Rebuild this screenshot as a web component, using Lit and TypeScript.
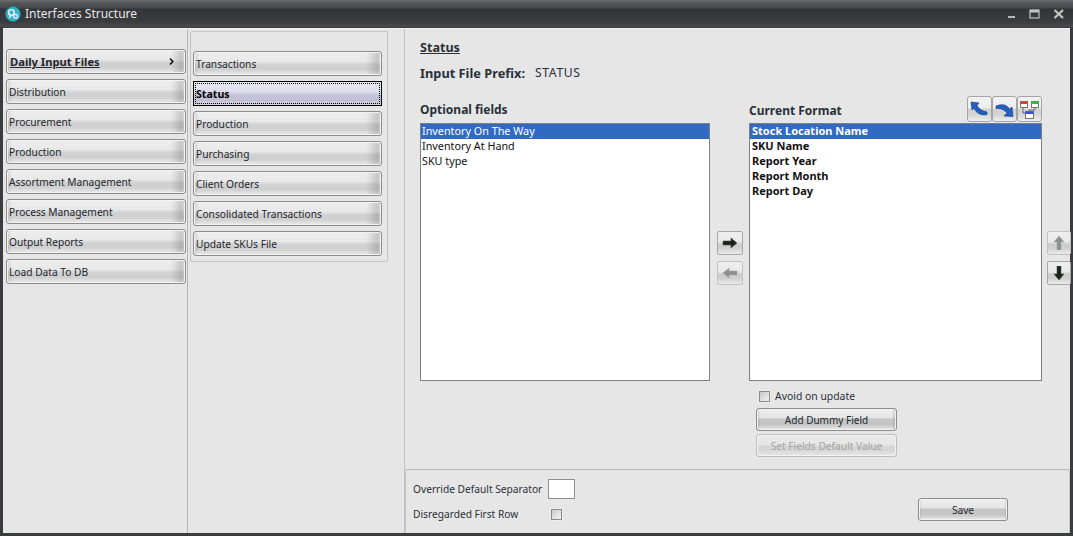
import { LitElement, html, css, svg } from 'lit';
import { customElement } from 'lit/decorators.js';

const MAIN_MENU = [
  'Distribution',
  'Procurement',
  'Production',
  'Assortment Management',
  'Process Management',
  'Output Reports',
  'Load Data To DB',
];
const SUB_MENU = ['Transactions', 'Status', 'Production', 'Purchasing', 'Client Orders', 'Consolidated Transactions', 'Update SKUs File'];
const OPTIONAL = ['Inventory On The Way', 'Inventory At Hand', 'SKU type'];
const CURRENT = ['Stock Location Name', 'SKU Name', 'Report Year', 'Report Month', 'Report Day'];

const arrow = (d: string, on: boolean) => svg`<svg width="16" height="14" viewBox="0 0 16 14">
  <path d=${d} fill=${on ? '#1c1f1c' : '#8d918d'} stroke=${on ? '#4b554b' : '#a5a8a5'} stroke-width=".6"/></svg>`;

@customElement('app-root')
export class AppRoot extends LitElement {
  static styles = css`
    :host {
      display: block;
      width: 1073px;
      height: 536px;
      overflow: hidden;
      background: #3a3c3f;
      font-family: "Noto Sans", "DejaVu Sans", sans-serif;
      font-size: 10.2px;
      color: #2b2f38;
    }
    .title {
      height: 28px;
      box-sizing: border-box;
      display: flex;
      align-items: center;
      padding: 0 8px 1px 5px;
      gap: 4px;
      background: linear-gradient(#6a6c70 0, #55575b 3px, #45474b 8px, #323438 9px, #3b3d41 22px, #4a4c50 27px, #2b2c2f 28px);
      color: #e8e8e8;
      font-size: 12px;
    }
    .title .name { flex: 1; }
    .win { display: flex; align-items: center; gap: 12px; }
    .body {
      height: 505px;
      margin: 0 3px 0 3px;
      display: grid;
      grid-template-columns: 185px 217px 1fr;
      background: #e6e6e6;
      border-top: 1px solid #f4f4f4;
      box-sizing: border-box;
    }
    .col-main {
      padding: 20px 1px 0 3px;
      display: flex;
      flex-direction: column;
      gap: 5px;
      border-right: 1px solid #b4b4b4;
      box-sizing: border-box;
    }
    .col-sub {
      padding: 2px 16px 0 2px;
      border-right: 1px solid #c0c0c0;
      box-sizing: border-box;
    }
    .sub-panel {
      height: 231px;
      box-sizing: border-box;
      border: 1px solid #c4c4c4;
      border-radius: 2px;
      padding: 19px 5px 0 2px;
      display: flex;
      flex-direction: column;
      gap: 5px;
    }
    .btn {
      height: 25px;
      box-sizing: border-box;
      display: flex;
      align-items: center;
      justify-content: center;
      border: 1px solid #8c8c8c;
      border-radius: 3px;
      color: #23262e;
      white-space: nowrap;
      box-shadow: inset 0 0 0 1px #f3f3f3;
      background:
        linear-gradient(90deg, rgba(120,120,120,.28), rgba(120,120,120,0) 3%, rgba(120,120,120,0) 97%, rgba(110,110,110,.35)),
        linear-gradient(#ededed 0, #e7e7e7 40%, #c4c4c4 50%, #c6c6c6 75%, #ebebeb 100%);
    }
    .nav {
      justify-content: flex-start;
      padding-left: 2px;
      background:
        linear-gradient(90deg, rgba(120,120,120,.2), rgba(120,120,120,0) 3%, rgba(120,120,120,0) 92%, rgba(90,90,90,.25) 98%, rgba(120,120,120,.15)),
        linear-gradient(#eeeeee 0, #e8e8e8 42%, #d2d2d2 54%, #cfcfcf 75%, #ececec 100%);
    }
    .daily {
      justify-content: space-between;
      font-weight: bold;
      padding: 0 11px 0 3px;
      font-size: 11.2px;
    }
    .daily span { text-decoration: underline; }
    .sel {
      font-weight: bold;
      font-size: 10.6px;
      color: #000;
      border: 1px solid #000;
      border-radius: 0;
      padding-left: 2px;
      box-shadow: none;
      background: linear-gradient(#e9e9f3 0, #dedeec 40%, #c4c2d8 60%, #c3c1d5 80%, #d8d6e4 100%);
      outline: 1px dotted #000;
      outline-offset: -3px;
    }
    .right {
      display: flex;
      flex-direction: column;
      min-width: 0;
    }
    .content {
      height: 440px;
      box-sizing: border-box;
      padding: 12px 0 0 15px;
    }
    h1 {
      margin: 0;
      font-size: 12.6px;
      line-height: 14px;
      text-decoration: underline;
      color: #2b2f38;
    }
    .prefix {
      margin-top: 11px;
      line-height: 14px;
      font-size: 12.8px;
      display: flex;
      gap: 10px;
    }
    .prefix span { font-size: 12.2px; letter-spacing: .6px; }
    .fields {
      display: grid;
      grid-template-columns: 290px 39px 293px 30px;
      grid-template-rows: 27px 258px auto;
      margin-top: 16px;
    }
    .fields h2 {
      margin: 0;
      font-size: 12px;
      line-height: 14px;
      align-self: end;
      padding-bottom: 6px;
      color: #2b2f38;
    }
    .head {
      display: flex;
      justify-content: space-between;
      align-items: flex-end;
    }
    .head h2 { padding-bottom: 5px; }
    .tools { display: flex; margin-bottom: 1px; }
    .tool {
      width: 25px;
      height: 26px;
      box-sizing: border-box;
      display: flex;
      align-items: center;
      justify-content: center;
      border: 1px solid #a5a5a5;
      border-radius: 3px;
      background: linear-gradient(#f2f2f2 0, #ededed 45%, #cfcfcf 52%, #d6d6d6 75%, #eeeeee 100%);
    }
    .list {
      background: #fff;
      border: 1px solid #7f7f7f;
      padding: 0;
      font-size: 10.8px;
      color: #111;
      overflow: hidden;
    }
    .list div { padding-left: 1px; height: 15px; line-height: 13px; white-space: nowrap; }
    .list .on { background: #316ac5; color: #fff; }
    .list.bold { font-weight: bold; font-size: 11px; }
    .list.bold div { padding-left: 2px; }
    .list.bold .on { color: #fff; }
    .move {
      display: flex;
      flex-direction: column;
      align-items: center;
      gap: 6px;
      padding-top: 108px;
    }
    .move.side { padding: 108px 0 0 5px; align-items: flex-start; }
    .mv {
      width: 26px;
      height: 24px;
      box-sizing: border-box;
      display: flex;
      align-items: center;
      justify-content: center;
      border: 1px solid #a8a8a8;
      border-radius: 2px;
      background: linear-gradient(#efefef 0, #e9e9e9 45%, #cccccc 55%, #d0d0d0 75%, #ececec 100%);
    }
    .mv.off { border-color: #c2c2c2; }
    .side .mv { width: 24px; }
    .under {
      grid-column: 3;
      padding: 8px 0 0 7px;
      display: flex;
      flex-direction: column;
      align-items: flex-start;
    }
    .check {
      display: flex;
      align-items: center;
      gap: 5px;
      margin-left: 3px;
      height: 14px;
      margin-bottom: 5px;
      font-size: 10.4px;
    }
    .box {
      width: 11px;
      height: 11px;
      box-sizing: border-box;
      border: 1px solid #8a8a8a;
      outline: 1px solid #ededed;
      background: linear-gradient(135deg, #c8c8c8, #f4f4f4);
      display: inline-block;
    }
    .act { width: 141px; height: 23px; margin-bottom: 3px; font-size: 10px; }
    .act.off {
      height: 23px;
      font-size: 10.2px;
      color: #a2a2a2;
      border-color: #bdbdbd;
      background: linear-gradient(#eaeaea 0, #e6e6e6 45%, #d4d4d4 55%, #d8d8d8 75%, #e8e8e8 100%);
    }
    .footer {
      height: 64px;
      box-sizing: border-box;
      border-top: 1px solid #b8b8b8;
      border-left: 1px solid #c4c4c4;
      border-right: 1px solid #c4c4c4;
      border-radius: 3px 3px 0 0;
      padding: 9px 61px 0 7px;
      display: flex;
      justify-content: space-between;
      align-items: flex-start;
    }
    .opts { display: grid; grid-template-columns: 135px auto; row-gap: 8px; align-items: center; white-space: nowrap; }
    .sep { width: 27px; height: 20px; box-sizing: border-box; background: #fff; border: 1px solid #8f8f8f; }
    .opts .box { margin-left: 3px; }
    .save { width: 90px; height: 23px; margin-top: 19px; }
  `;

  private windowButtons() {
    return html`<div class="win">
      <svg width="10" height="10" viewBox="0 0 10 10"><rect x="1" y="7" width="7" height="2" fill="#b9b9b9"/></svg>
      <svg width="12" height="10" viewBox="0 0 12 10"><rect x="1" y="1" width="9" height="8" fill="none" stroke="#c4c4c4" stroke-width="1.2"/><rect x="1" y="1" width="9" height="2.5" fill="#c4c4c4"/></svg>
      <svg width="12" height="10" viewBox="0 0 12 10"><path d="M1.5 1 L10 9 M10 1 L1.5 9" stroke="#c6c6c6" stroke-width="2.2"/></svg>
    </div>`;
  }

  private logo() {
    return html`<svg width="16" height="16" viewBox="0 0 15 15">
      <circle cx="7.5" cy="7.5" r="7" fill="#35b3c6"/>
      <circle cx="7.5" cy="7.5" r="7" fill="none" stroke="#1b7f90" stroke-width=".7"/>
      <circle cx="6" cy="6" r="2.6" fill="none" stroke="#eef" stroke-width="1.4"/>
      <circle cx="10" cy="9.6" r="1.8" fill="none" stroke="#eef" stroke-width="1.2"/>
      <path d="M4 11 L6 8.5" stroke="#eef" stroke-width="1.2"/>
    </svg>`;
  }

  render() {
    return html`
      <div class="title">
        ${this.logo()}
        <span class="name">Interfaces Structure</span>
        ${this.windowButtons()}
      </div>
      <div class="body">
        <div class="col-main">
          <div class="btn nav daily">
            <span>Daily Input Files</span>
            <svg width="5" height="7" viewBox="0 0 5 7"><path d="M1 .5 L3.8 3.5 L1 6.5" fill="none" stroke="#111" stroke-width="1.6"/></svg>
          </div>
          ${MAIN_MENU.map((m) => html`<div class="btn nav">${m}</div>`)}
        </div>
        <div class="col-sub">
          <div class="sub-panel">
            ${SUB_MENU.map((m) => html`<div class="btn nav ${m === 'Status' ? 'sel' : ''}">${m}</div>`)}
          </div>
        </div>
        <div class="right">
          <div class="content">
            <h1>Status</h1>
            <div class="prefix"><b>Input File Prefix:</b><span>STATUS</span></div>
            <div class="fields">
              <h2>Optional fields</h2>
              <div></div>
              <div class="head">
                <h2>Current Format</h2>
                <div class="tools">
                  <div class="tool">
                    <svg width="19" height="17" viewBox="0 0 19 17"><path d="M1 1 L9 2 L7 4.5 C9 8 12 10 17 11 L17 13.5 C11 15 6 12 4 7 L2 9 Z" fill="#2060c0" stroke="#123a7a" stroke-width=".6"/></svg>
                  </div>
                  <div class="tool">
                    <svg width="19" height="17" viewBox="0 0 19 17"><path d="M1 5 C7 2.5 12 3.5 14.5 8 L17 6 L18 15.5 L9 15 L12 12 C9 8.5 6 7 1 7.5 Z" fill="#2060c0" stroke="#123a7a" stroke-width=".6"/></svg>
                  </div>
                  <div class="tool">
                    <svg width="21" height="21" viewBox="0 0 21 21">
                      <path d="M4 8 V14 H7 M16 8 V11 H10 V12" stroke="#666" fill="none"/>
                      <rect x="1.5" y="2.5" width="7" height="6" fill="#fff" stroke="#777"/><rect x="1.5" y="2.5" width="7" height="2.5" fill="#e23b2c"/>
                      <rect x="12.5" y="2.5" width="7" height="6" fill="#fff" stroke="#777"/><rect x="12.5" y="2.5" width="7" height="2.5" fill="#22c43a"/>
                      <rect x="6.5" y="12.5" width="8" height="7" fill="#fff" stroke="#777"/><rect x="6.5" y="12.5" width="8" height="2.5" fill="#3a4fe0"/>
                    </svg>
                  </div>
                </div>
              </div>
              <div></div>
              <div class="list">
                ${OPTIONAL.map((f, i) => html`<div class=${i === 0 ? 'on' : ''}>${f}</div>`)}
              </div>
              <div class="move">
                <div class="mv">${arrow('M1 5 H9 V2 L15 7 L9 12 V9 H1 Z', true)}</div>
                <div class="mv off">${arrow('M15 5 H7 V2 L1 7 L7 12 V9 H15 Z', false)}</div>
              </div>
              <div class="list bold">
                ${CURRENT.map((f, i) => html`<div class=${i === 0 ? 'on' : ''}>${f}</div>`)}
              </div>
              <div class="move side">
                <div class="mv off">${arrow('M8 0 L13 6 H10 V14 H6 V6 H3 Z', false)}</div>
                <div class="mv">${arrow('M8 14 L13 8 H10 V0 H6 V8 H3 Z', true)}</div>
              </div>
              <div class="under">
                <label class="check"><span class="box"></span>Avoid on update</label>
                <div class="btn act">Add Dummy Field</div>
                <div class="btn act off">Set Fields Default Value</div>
              </div>
            </div>
          </div>
          <div class="footer">
            <div class="opts">
              <span>Override Default Separator</span><div class="sep"></div>
              <span>Disregarded First Row</span><span class="box"></span>
            </div>
            <div class="btn save">Save</div>
          </div>
        </div>
      </div>
    `;
  }
}
